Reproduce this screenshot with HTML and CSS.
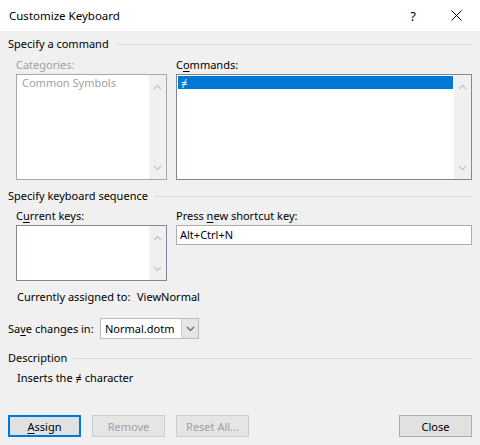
FILE: index.html
```html
<!DOCTYPE html>
<html>
<head>
<meta charset="utf-8">
<link rel="stylesheet" href="styles.css">
</head>
<body>
<div class="dialog">
  <div class="titlebar">
    <span class="title">Customize Keyboard</span>
    <span class="help">?</span>
    <svg class="close" width="11" height="11" viewBox="0 0 11 11"><path d="M0.5 0.5 L10.5 10.5 M10.5 0.5 L0.5 10.5" stroke="#000" stroke-width="1" fill="none"/></svg>
  </div>
  <div class="content">
    <div class="group-header first"><span>Specify a command</span><div class="rule"></div></div>
    <div class="two-col">
      <div class="col">
        <div class="label disabled">Categories:</div>
        <div class="listbox tall disabled-box">
          <div class="list-items"><div class="item dim">Common Symbols</div></div>
          <div class="scrollbar">
            <svg width="9" height="6" viewBox="0 0 9 6"><polyline points="1,5 4.5,1.5 8,5" fill="none" stroke="#c6c6c6" stroke-width="1.3"/></svg>
            <svg width="9" height="6" viewBox="0 0 9 6"><polyline points="1,1 4.5,4.5 8,1" fill="none" stroke="#c6c6c6" stroke-width="1.3"/></svg>
          </div>
        </div>
      </div>
      <div class="col">
        <div class="label">C<u>o</u>mmands:</div>
        <div class="listbox tall">
          <div class="list-items"><div class="item selected">≠</div></div>
          <div class="scrollbar">
            <svg width="9" height="6" viewBox="0 0 9 6"><polyline points="1,5 4.5,1.5 8,5" fill="none" stroke="#c6c6c6" stroke-width="1.3"/></svg>
            <svg width="9" height="6" viewBox="0 0 9 6"><polyline points="1,1 4.5,4.5 8,1" fill="none" stroke="#c6c6c6" stroke-width="1.3"/></svg>
          </div>
        </div>
      </div>
    </div>

    <div class="group-header second"><span>Specify keyboard sequence</span><div class="rule"></div></div>
    <div class="two-col keys">
      <div class="col">
        <div class="label">C<u>u</u>rrent keys:</div>
        <div class="listbox short">
          <div class="list-items"></div>
          <div class="scrollbar">
            <svg width="9" height="6" viewBox="0 0 9 6"><polyline points="1,5 4.5,1.5 8,5" fill="none" stroke="#c6c6c6" stroke-width="1.3"/></svg>
            <svg width="9" height="6" viewBox="0 0 9 6"><polyline points="1,1 4.5,4.5 8,1" fill="none" stroke="#c6c6c6" stroke-width="1.3"/></svg>
          </div>
        </div>
      </div>
      <div class="col">
        <div class="label">Press <u>n</u>ew shortcut key:</div>
        <div class="textbox">Alt+Ctrl+N</div>
      </div>
    </div>
    <div class="assigned"><span class="assigned-label">Currently assigned to:</span><span class="assigned-value">ViewNormal</span></div>

    <div class="save-row">
      <span class="save-label">Sa<u>v</u>e changes in:</span>
      <div class="select">
        <span class="select-text">Normal.dotm</span>
        <span class="select-btn"><svg width="9" height="6" viewBox="0 0 9 6"><polyline points="1,1 4.5,4.5 8,1" fill="none" stroke="#606060" stroke-width="1.1"/></svg></span>
      </div>
    </div>

    <div class="group-header third"><span>Description</span><div class="rule"></div></div>
    <div class="description">Inserts the ≠ character</div>

    <div class="buttons">
      <button class="btn default"><u>A</u>ssign</button>
      <button class="btn disabled-btn">Remove</button>
      <button class="btn disabled-btn">Reset All...</button>
      <div class="spacer"></div>
      <button class="btn">Close</button>
    </div>
  </div>
</div>
</body>
</html>
```
FILE: styles.css
```css
* { box-sizing: border-box; }
html, body { margin: 0; padding: 0; }
body {
  width: 480px;
  height: 445px;
  background: #f0f0f0;
  font-family: "Noto Sans", "Open Sans", sans-serif;
  font-size: 11px;
  color: #000;
  overflow: hidden;
  white-space: nowrap;
}
u { text-decoration-thickness: 1px; text-underline-offset: 2px; }
.dialog { width: 480px; height: 445px; }
.titlebar {
  height: 31px;
  background: #fff;
  display: flex;
  align-items: center;
  padding-left: 9px;
}
.title { flex: 1; font-size: 11.5px; }
.help { width: 12px; font-size: 13px; margin-right: 32px; text-align: center; }
.close { margin-right: 18px; }
.content { padding: 0 8px; }
.group-header {
  display: flex;
  align-items: center;
  height: 16px;
  line-height: 16px;
}
.group-header .rule { flex: 1; height: 1px; background: #dcdcdc; margin-left: 7px; }
.group-header.first { margin-top: 5px; }
.group-header.second { margin-top: 8px; }
.group-header.third { margin-top: 11px; }
.two-col {
  display: grid;
  grid-template-columns: 151px 296px;
  column-gap: 9px;
  padding-left: 8px;
  margin-top: 5px;
}
.two-col.keys { margin-top: 4px; }
.label { height: 16px; line-height: 16px; margin-bottom: 1px; }
.label.disabled { color: #a0a0a0; }
.listbox {
  background: #fff;
  border: 1px solid #828790;
  display: flex;
}
.listbox.disabled-box { border-color: #a8a8a8; }
.listbox.tall { height: 106px; }
.listbox.short { height: 56px; }
.list-items { flex: 1; padding: 1px; }
.item { height: 13px; line-height: 13px; padding-left: 4px; }
.item.dim { color: #a0a0a0; }
.item.selected { background: #0078d7; color: #fff; padding-left: 3px; }
.scrollbar {
  width: 17px;
  background: #f0f0f0;
  display: flex;
  flex-direction: column;
  justify-content: space-between;
  align-items: center;
  padding: 9px 0 8px;
}
.textbox {
  height: 20px;
  background: #fff;
  border: 1px solid #adadad;
  line-height: 18px;
  padding-left: 3px;
}
.assigned {
  padding-left: 9px;
  margin-top: 8px;
  height: 16px;
  line-height: 16px;
  display: flex;
}
.assigned-label { width: 120px; }
.save-row {
  margin-top: 13px;
  display: flex;
  align-items: center;
  height: 21px;
}
.save-label { width: 92px; }
.select {
  width: 99px;
  height: 21px;
  border: 1px solid #bcbcbc;
  background: #fff;
  display: flex;
}
.select-text { flex: 1; line-height: 19px; padding-left: 4px; }
.select-btn {
  width: 17px;
  background: #e5e5e5;
  border-left: 1px solid #d0d0d0;
  display: flex;
  align-items: center;
  justify-content: center;
}
.description {
  margin-top: 4px;
  padding-left: 9px;
  height: 16px;
  line-height: 16px;
}
.buttons {
  margin-top: 29px;
  display: flex;
  gap: 11px;
}
.spacer { flex: 1; }
.btn {
  width: 73px;
  height: 22px;
  background: #e1e1e1;
  border: 1px solid #adadad;
  font-family: inherit;
  font-size: 11px;
  color: #000;
  padding: 0;
  margin: 0;
}
.btn.default { border: 2px solid #0078d7; }
.btn.disabled-btn { color: #a0a0a0; background: #e5e5e5; border-color: #cccccc; }
```
